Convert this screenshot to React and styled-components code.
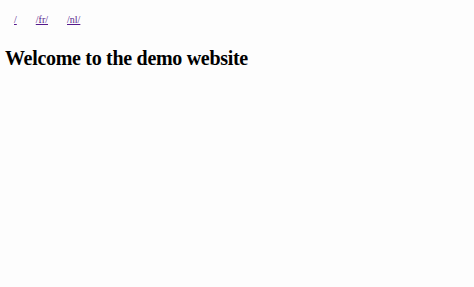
import React from 'react';
import styled, { createGlobalStyle } from 'styled-components';

const GlobalStyle = createGlobalStyle`
  html, body {
    margin: 0;
    padding: 0;
    background: #fdfdfd;
  }
  body {
    font-family: "Liberation Serif", "Times New Roman", serif;
    color: #000;
  }
`;

const Page = styled.div`
  padding: 14px 5px 0;
`;

const Nav = styled.nav`
  display: flex;
  gap: 19px;
  padding-left: 9px;
  font-size: 10px;
`;

const NavLink = styled.a`
  color: #551a8b;
  text-decoration: underline;
`;

const Title = styled.h1`
  margin: 22px 0 0;
  font-size: 20px;
  letter-spacing: -0.3px;
  font-weight: bold;
`;

const links = ['/', '/fr/', '/nl/'];

const App = () => (
  <Page>
    <GlobalStyle />
    <Nav>
      {links.map(link => (
        <NavLink key={link} href={link}>
          {link}
        </NavLink>
      ))}
    </Nav>
    <Title>Welcome to the demo website</Title>
  </Page>
);

export default App;
